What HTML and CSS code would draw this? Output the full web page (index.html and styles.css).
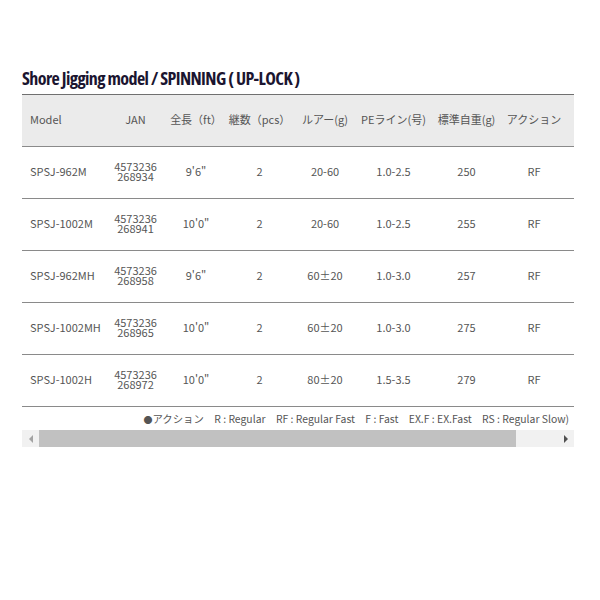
FILE: index.html
```html
<!DOCTYPE html>
<html lang="ja">
<head>
<meta charset="utf-8">
<title>Shore Jigging model / SPINNING ( UP-LOCK )</title>
<link rel="stylesheet" href="styles.css">
</head>
<body>
<div class="page">
  <h2 class="title">Shore Jigging model / SPINNING ( UP-LOCK )</h2>
  <div class="scroller">
    <table class="spec">
      <colgroup>
        <col class="c-model"><col class="c-jan"><col class="c-len"><col class="c-pcs"><col class="c-lure"><col class="c-pe"><col class="c-wt"><col class="c-act"><col class="c-more">
      </colgroup>
      <thead>
        <tr>
          <th class="left">Model</th>
          <th>JAN</th>
          <th>全長（ft）</th>
          <th>継数（pcs）</th>
          <th>ルアー(g)</th>
          <th>PEライン(号)</th>
          <th>標準自重(g)</th>
          <th>アクション</th>
          <th></th>
        </tr>
      </thead>
      <tbody>
        <tr>
          <td class="left">SPSJ-962M</td>
          <td class="two">4573236<br>268934</td>
          <td>9'6"</td>
          <td>2</td>
          <td>20-60</td>
          <td>1.0-2.5</td>
          <td>250</td>
          <td>RF</td>
          <td></td>
        </tr>
        <tr>
          <td class="left">SPSJ-1002M</td>
          <td class="two">4573236<br>268941</td>
          <td>10'0"</td>
          <td>2</td>
          <td>20-60</td>
          <td>1.0-2.5</td>
          <td>255</td>
          <td>RF</td>
          <td></td>
        </tr>
        <tr>
          <td class="left">SPSJ-962MH</td>
          <td class="two">4573236<br>268958</td>
          <td>9'6"</td>
          <td>2</td>
          <td>60±20</td>
          <td>1.0-3.0</td>
          <td>257</td>
          <td>RF</td>
          <td></td>
        </tr>
        <tr>
          <td class="left">SPSJ-1002MH</td>
          <td class="two">4573236<br>268965</td>
          <td>10'0"</td>
          <td>2</td>
          <td>60±20</td>
          <td>1.0-3.0</td>
          <td>275</td>
          <td>RF</td>
          <td></td>
        </tr>
        <tr>
          <td class="left">SPSJ-1002H</td>
          <td class="two">4573236<br>268972</td>
          <td>10'0"</td>
          <td>2</td>
          <td>80±20</td>
          <td>1.5-3.5</td>
          <td>279</td>
          <td>RF</td>
          <td></td>
        </tr>
      </tbody>
    </table>
    <p class="note"><span class="dot">●</span>アクション　R : Regular　RF : Regular Fast　F : Fast　EX.F : EX.Fast　RS : Regular Slow)</p>
  </div>
  <div class="hscroll">
    <div class="sb-btn"><span class="arrow-left"></span></div>
    <div class="sb-track"><div class="sb-thumb"></div></div>
    <div class="sb-btn"><span class="arrow-right"></span></div>
  </div>
</div>
</body>
</html>
```
FILE: styles.css
```css
html, body {
  margin: 0;
  padding: 0;
  background: #ffffff;
}

.page {
  padding: 66px 26px 0 22px;
  width: 552px;
  font-family: "Noto Sans CJK JP", "Noto Sans", sans-serif;
  color: #555555;
}

.title {
  margin: 0 0 4px 0;
  font-family: "Open Sans", "DejaVu Sans", sans-serif;
  font-stretch: 75%;
  font-weight: 700;
  font-size: 18px;
  line-height: 24px;
  color: #1b1530;
  letter-spacing: -0.6px;
  white-space: nowrap;
}

.scroller {
  width: 552px;
  overflow: hidden;
}

.spec {
  border-collapse: collapse;
  table-layout: fixed;
  width: 613px;
  border-top: 1px solid #707070;
  font-size: 11px;
}

.c-model { width: 83px; }
.c-jan { width: 61px; }
.c-len { width: 60px; }
.c-pcs { width: 67px; }
.c-lure { width: 64px; }
.c-pe { width: 73px; }
.c-wt { width: 73px; }
.c-act { width: 62px; }
.c-more { width: 70px; }

.spec th,
.spec td {
  height: 48px;
  padding: 0 0 3px 0;
  text-align: center;
  vertical-align: middle;
  font-weight: 400;
  white-space: nowrap;
  border-bottom: 1px solid #8a8a8a;
  line-height: 14px;
}

.spec thead th {
  background: #ebebeb;
}

.spec .left {
  text-align: left;
  padding-left: 8px;
}

.spec .two {
  line-height: 10px;
}

.note {
  margin: 0;
  width: 547px;
  height: 23px;
  line-height: 23px;
  font-size: 10.4px;
  text-align: right;
  white-space: nowrap;
  color: #555555;
}

.dot {
  font-size: 9px;
}

.hscroll {
  display: flex;
  width: 552px;
  height: 17px;
  background: #f1f1f1;
}

.sb-btn {
  width: 17px;
  height: 17px;
  display: flex;
  align-items: center;
  justify-content: center;
  flex: none;
}

.sb-track {
  flex: 1;
  display: flex;
}

.sb-thumb {
  width: 477px;
  height: 17px;
  background: #c1c1c1;
}

.arrow-left {
  width: 0;
  height: 0;
  border-top: 4px solid transparent;
  border-bottom: 4px solid transparent;
  border-right: 4px solid #a3a3a3;
}

.arrow-right {
  width: 0;
  height: 0;
  border-top: 4px solid transparent;
  border-bottom: 4px solid transparent;
  border-left: 4px solid #505050;
}
```
